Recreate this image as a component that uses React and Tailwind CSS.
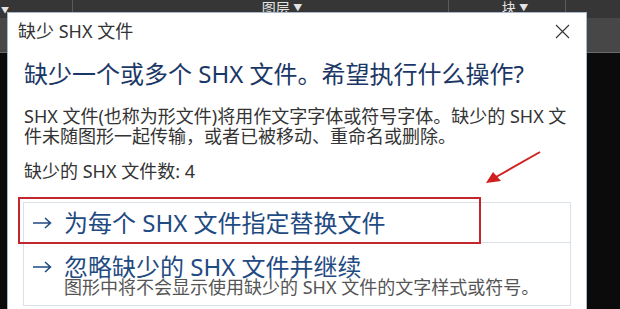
import React from 'react';

const font = { fontFamily: '"Noto Sans", "Noto Sans CJK SC", sans-serif' };

function CloseIcon() {
  return (
    <svg width="15" height="15" viewBox="0 0 15 15" className="block">
      <path d="M1 1 L14 14 M14 1 L1 14" stroke="#333" strokeWidth="1.1" fill="none" />
    </svg>
  );
}

function RedArrow() {
  return (
    <svg
      className="absolute left-[480px] top-[146px] pointer-events-none"
      width="66"
      height="42"
      viewBox="0 0 66 42"
    >
      <line x1="60" y1="6" x2="16" y2="31" stroke="#d01f1f" strokeWidth="2" />
      <polygon points="6,37 13,26 21,35" fill="#d01f1f" />
    </svg>
  );
}

function LinkArrow() {
  return (
    <svg width="19" height="12" viewBox="0 0 19 12" className="block mr-[12px] shrink-0">
      <path d="M0 6 H17 M12 1 L17.5 6 L12 11" stroke="#1f4a82" strokeWidth="1.5" fill="none" />
    </svg>
  );
}

export default function App() {
  return (
    <div className="relative w-[620px] h-[309px] overflow-hidden bg-[#0b0b0b]" style={font}>
      {/* ribbon behind the dialog */}
      <div className="flex h-[18px] bg-[#363636] text-[14px] leading-[14px] text-[#e4e4e4]">
        <div className="w-[73px] border-r border-[#5a5a5a] pl-px pt-[3px] text-[8px]">▼</div>
        <div className="w-[376px] border-r border-[#5a5a5a] flex justify-center pt-[1px]">
          <span className="ml-[43px]">图层 <span className="text-[9px] align-top">▼</span></span>
        </div>
        <div className="w-[117px] border-r border-[#5a5a5a] flex justify-center pt-[1px]">
          <span className="ml-[16px]">块 <span className="text-[9px] align-top">▼</span></span>
        </div>
        <div className="flex-1"></div>
      </div>
      <div className="h-[35px] bg-[#474747] border-b border-[#6b6b6b]"></div>

      {/* dialog */}
      <div className="absolute left-[7px] top-[12px] w-[580px] h-[310px] bg-white border border-[#a9b9cc]">
        <div className="flex h-[36px] items-center justify-between pl-[10px] pr-[16px]">
          <span className="text-[18px] text-[#333]">缺少 SHX 文件</span>
          <CloseIcon />
        </div>

        <div className="px-[15px]">
          <h1 className="mt-[10px] pl-px text-[24px] leading-[30px] text-[#1b3766]">
            缺少一个或多个 SHX 文件。希望执行什么操作?
          </h1>
          <p className="mt-[17px] pl-px text-[18px] leading-[20px] text-[#333]">
            SHX 文件(也称为形文件)将用作文字字体或符号字体。缺少的 SHX 文
            <br />
            件未随图形一起传输，或者已被移动、重命名或删除。
          </p>
          <p className="mt-[15px] pl-px text-[18px] leading-[20px] text-[#333]">缺少的 SHX 文件数: 4</p>

          <div className="mt-[21px] border border-[#d9e0e8]">
            <div className="relative flex h-[40px] items-center pl-[9px] border-b border-[#d9e0e8] text-[24px] leading-[28px] text-[#1f4a82]">
              <LinkArrow />
              <span>为每个 SHX 文件指定替换文件</span>
              <div className="absolute left-[-6px] top-[-6px] w-[463px] h-[47px] border-2 border-[#c3272d]"></div>
            </div>
            <div className="h-[62px] pl-[9px] pt-[13px]">
              <div className="flex items-center h-[22px] text-[24px] leading-[22px] text-[#1f4a82]">
                <LinkArrow />
                <span>忽略缺少的 SHX 文件并继续</span>
              </div>
              <div className="pl-[31px] text-[18px] leading-[18px] text-[#555]">
                图形中将不会显示使用缺少的 SHX 文件的文字样式或符号。
              </div>
            </div>
          </div>
        </div>
      </div>

      <RedArrow />
    </div>
  );
}
